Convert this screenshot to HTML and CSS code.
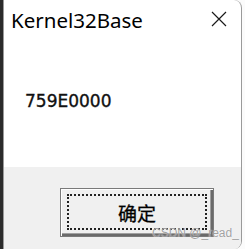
FILE: index.html
```html
<!DOCTYPE html>
<html lang="zh-CN">
<head>
    <meta charset="UTF-8">
    <meta name="viewport" content="width=device-width, initial-scale=1.0">
    <title>Kernel32Base</title>
    <link rel="stylesheet" href="styles.css">
</head>
<body>
    <div class="edge"></div>
    <div class="dialog">
        <div class="titlebar">
            <span class="title">Kernel32Base</span>
            <button type="button" class="closeBtn" aria-label="Close">
                <svg width="16" height="16" viewBox="0 0 16 16">
                    <path d="M1 1 L15 15 M15 1 L1 15" stroke="#1a1a1a" stroke-width="1.2" fill="none"/>
                </svg>
            </button>
        </div>

        <div class="content">
            <p class="message">759E0000</p>
        </div>

        <div class="footer">
            <button type="button" class="okBtn">
                <span class="focusRing">确定</span>
            </button>
            <span class="watermark">CSDN @_read_</span>
        </div>
    </div>
</body>
</html>
```

FILE: styles.css
```css
body {
        margin: 0;
        width: 245px;
        height: 249px;
        background-color: #fbfbfb;
        display: flex;
        overflow: hidden;
}

.edge {
        width: 3px;
        background-color: #2b2b2b;
}

.dialog {
        width: 237px;
        height: 249px;
        border: 1px solid #9a9a9a;
        border-top: none;
        border-bottom: none;
        border-radius: 0 8px 8px 0;
        display: flex;
        flex-direction: column;
        background-color: #ffffff;
        overflow: hidden;
}

.titlebar {
        height: 38px;
        display: flex;
        align-items: center;
        justify-content: space-between;
        padding: 0 14px 0 7px;
}

.title {
        font-family: "Noto Sans", "Open Sans", sans-serif;
        font-size: 20.5px;
        color: #000000;
        margin-top: 1px;
}

.closeBtn {
        border: none;
        background: none;
        padding: 0;
        width: 16px;
        height: 16px;
        display: flex;
}

.content {
        height: 129px;
        padding-left: 21px;
}

.message {
        margin: 53px 0 0 0;
        font-family: "DejaVu Sans", sans-serif;
        font-size: 17px;
        color: #111111;
        -webkit-text-stroke: 0.35px #111111;
}

.footer {
        flex: 1;
        background-color: #f0f0f0;
        position: relative;
        padding: 21px 0 0 56px;
}

.okBtn {
        width: 154px;
        height: 49px;
        padding: 5px 6px 6px 6px;
        border: 1px solid #7a7a7a;
        background-color: #f0f0f0;
        box-shadow: inset 1px 1px 0 #ffffff, inset -2px -2px 0 #6a6a6a, inset -3px -3px 0 #a0a0a0;
        display: flex;
}

.focusRing {
        flex: 1;
        border: 2px dotted #222222;
        display: flex;
        align-items: center;
        justify-content: center;
        font-family: "Noto Sans CJK SC", sans-serif;
        font-size: 19px;
        color: #000000;
        -webkit-text-stroke: 0.3px #000000;
}

.watermark {
        position: absolute;
        left: 148px;
        top: 59px;
        font-family: "Liberation Sans", sans-serif;
        font-size: 12px;
        color: rgba(120, 120, 120, 0.7);
        text-shadow: 0 0 1px #ffffff;
}
```
